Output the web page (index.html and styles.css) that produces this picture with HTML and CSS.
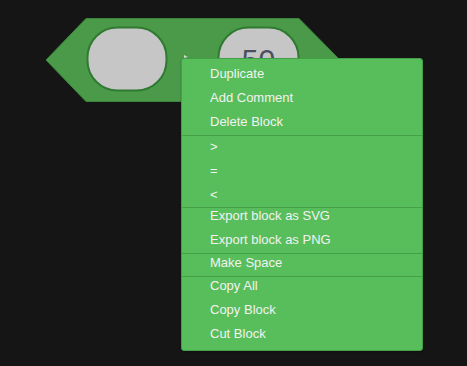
FILE: index.html
```html
<!DOCTYPE html>
<html lang="en">
<head>
<meta charset="UTF-8">
<title>Block context menu</title>
<link rel="stylesheet" href="styles.css">
</head>
<body>
<div class="workspace">
  <svg class="canvas" width="467" height="366" viewBox="0 0 467 366">
    <!-- compare block -->
    <polygon class="blk" points="46,60 86,18.5 299,18.5 340,60 299,101.5 86,101.5"/>
    <rect class="slot" x="87.5" y="27.5" width="79" height="63" rx="30" ry="30"/>
    <rect class="slot" x="218.5" y="27.5" width="80" height="63" rx="30" ry="30"/>
    <text class="num" x="258.5" y="69.5" text-anchor="middle">50</text>
    <polygon class="caret" points="184,55 188,57 184,58"/>
  </svg>

  <ul class="menu">
    <li>Duplicate</li>
    <li>Add Comment</li>
    <li>Delete Block</li>
    <li class="sep sep-first"></li>
    <li>&gt;</li>
    <li>=</li>
    <li>&lt;</li>
    <li class="sep sep-tight"></li>
    <li>Export block as SVG</li>
    <li>Export block as PNG</li>
    <li class="sep"></li>
    <li>Make Space</li>
    <li class="sep"></li>
    <li>Copy All</li>
    <li>Copy Block</li>
    <li>Cut Block</li>
  </ul>
</div>
</body>
</html>
```

FILE: styles.css
```css
* { box-sizing:border-box; margin:0; padding:0; }
body {
  background:#151515;
  font-family:"Liberation Sans", Arial, sans-serif;
  width:467px; height:366px; overflow:hidden;
}
.workspace { position:relative; width:467px; height:366px; }
.canvas { display:block; }
.blk { fill:#4a9a49; stroke:#3b843b; stroke-width:1; }
.slot { fill:#c6c6c6; stroke:#2f7a30; stroke-width:2; }
.num { font-family:"Liberation Sans", Arial, sans-serif; font-size:30px; fill:#4b5060; }
.caret { fill:#d0d8d0; }

.menu {
  position:absolute; left:181px; top:58px;
  width:242px; height:293px;
  list-style:none;
  background:#58be5b;
  border:1px solid #44a047; border-radius:3px;
  padding:3px 0 4px;
  box-shadow:0 1px 2px rgba(0,0,0,0.25);
}
.menu li {
  height:24px; line-height:24px;
  padding-left:28px;
  font-size:13px; color:#f2f2f2;
  white-space:nowrap;
}
.menu li.sep {
  height:1px; line-height:1px; padding:0;
  background:#44a047;
  margin:1px 0 -3px;
}
.menu li.sep-first { margin:1px 0 -1px; }
.menu li.sep-tight { margin:0 0 -4px; }
```
